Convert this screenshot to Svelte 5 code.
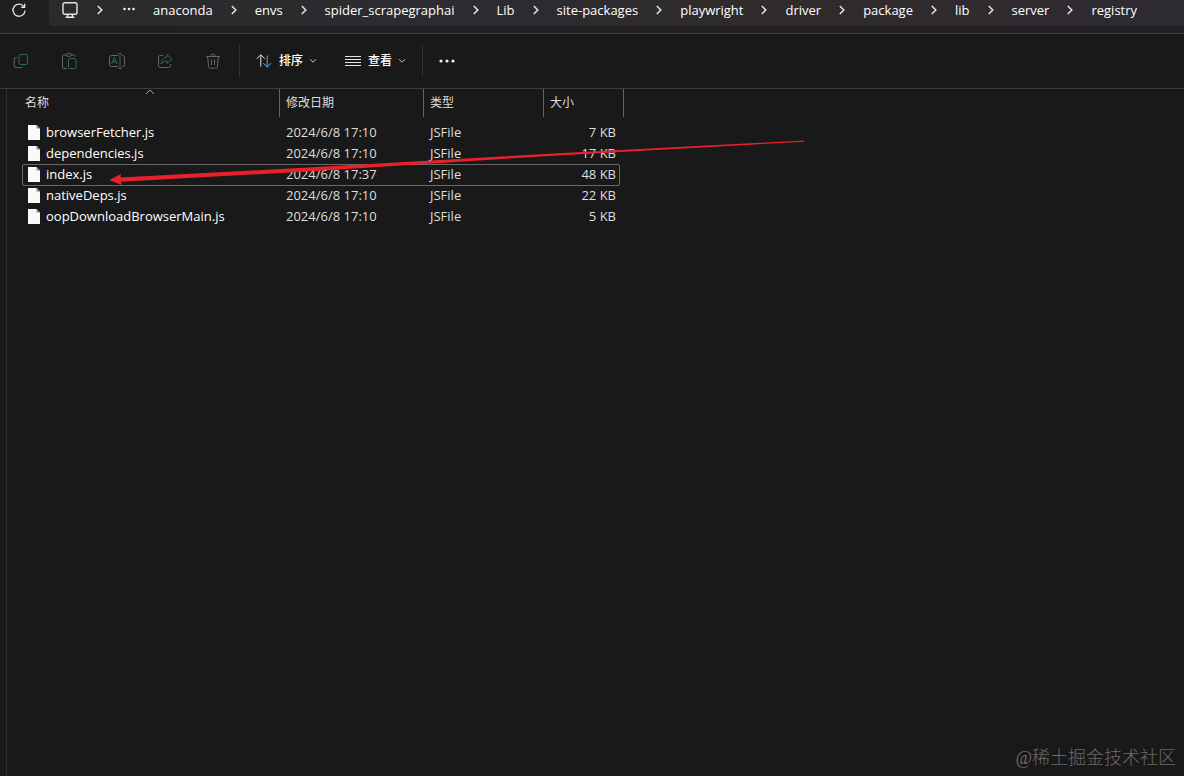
<script>
  const crumbs = [
    'anaconda',
    'envs',
    'spider_scrapegraphai',
    'Lib',
    'site-packages',
    'playwright',
    'driver',
    'package',
    'lib',
    'server',
    'registry'
  ];

  const files = [
    { name: 'browserFetcher.js', modified: '2024/6/8 17:10', type: 'JSFile', size: '7 KB' },
    { name: 'dependencies.js', modified: '2024/6/8 17:10', type: 'JSFile', size: '17 KB' },
    { name: 'index.js', modified: '2024/6/8 17:37', type: 'JSFile', size: '48 KB' },
    { name: 'nativeDeps.js', modified: '2024/6/8 17:10', type: 'JSFile', size: '22 KB' },
    { name: 'oopDownloadBrowserMain.js', modified: '2024/6/8 17:10', type: 'JSFile', size: '5 KB' }
  ];

  let focused = $state('index.js');
</script>

{#snippet chevron()}
  <svg class="chevron" width="8" height="10" viewBox="0 0 8 10" aria-hidden="true">
    <path d="M1.8 1 5.8 5l-4 4" />
  </svg>
{/snippet}

{#snippet caret()}
  <svg class="caret" width="8" height="6" viewBox="0 0 8 6" aria-hidden="true">
    <path d="M1 1.2l3 3 3-3" />
  </svg>
{/snippet}

<div class="explorer">
  <header class="address-row">
    <button class="refresh" aria-label="刷新">
      <svg width="16" height="16" viewBox="0 0 16 16">
        <path d="M13.2 5.2A6 6 0 1 0 14 8.4M13.6 1.8V5.4H10" />
      </svg>
    </button>
    <nav class="address">
      <a class="device" href="#pc" aria-label="此电脑">
        <svg width="16" height="16" viewBox="0 0 16 16">
          <rect x="1" y="0.8" width="14" height="11.4" rx="1.8" />
          <path d="M5.6 12.4V15M10.4 12.4V15M3.6 15.2h8.8" />
        </svg>
      </a>
      {@render chevron()}
      <button class="overflow" aria-label="更多位置">
        <svg width="12" height="4" viewBox="0 0 12 4">
          <circle cx="1.5" cy="2" r="1.3" /><circle cx="6" cy="2" r="1.3" /><circle cx="10.5" cy="2" r="1.3" />
        </svg>
      </button>
      <ol class="crumbs">
        {#each crumbs as crumb, i}
          <li>
            {#if i > 0}{@render chevron()}{/if}
            <a href="#{crumb}">{crumb}</a>
          </li>
        {/each}
      </ol>
    </nav>
  </header>

  <div class="toolbar">
    <div class="group actions">
      <button disabled aria-label="复制">
        <svg width="16" height="16" viewBox="0 0 16 16">
          <rect class="accent" x="6" y="1.5" width="8.5" height="10" rx="1.6" />
          <path d="M4 4.5H3A1.8 1.8 0 0 0 1.2 6.3v6.2a2.2 2.2 0 0 0 2.2 2.2H8a1.8 1.8 0 0 0 1.8-1" />
        </svg>
      </button>
      <button disabled aria-label="粘贴">
        <svg width="16" height="16" viewBox="0 0 16 16">
          <path d="M5 2H2.8A1.3 1.3 0 0 0 1.5 3.3v11A1.3 1.3 0 0 0 2.8 15.5H6M10.5 2h2.2A1.3 1.3 0 0 1 14 3.3V4" />
          <rect x="5" y="0.6" width="5.6" height="2.6" rx="1.2" />
          <rect class="accent" x="7.5" y="5.5" width="7.5" height="10" rx="1.2" />
        </svg>
      </button>
      <button disabled aria-label="重命名">
        <svg width="18" height="16" viewBox="0 0 18 16">
          <path d="M10 2.5H3.5a2 2 0 0 0-2 2v7a2 2 0 0 0 2 2H10M14 2.5h.5a2 2 0 0 1 2 2v7a2 2 0 0 1-2 2H14" />
          <path class="accent" d="M12 .5v15M10.3 .5h3.4M10.300 15.500h3.400" />
          <path class="accent" d="M3.600 11l2.800-6.500L9.200 11M4.600 8.800h3.600" />
        </svg>
      </button>
      <button disabled aria-label="共享">
        <svg width="16" height="16" viewBox="0 0 16 16">
          <path d="M6 2.500H3.500a2 2 0 0 0-2 2v8a2 2 0 0 0 2 2h8a2 2 0 0 0 2-2V11" />
          <path class="accent" d="M10 1.500L15 6l-5 4.500V8C7.500 8 5.700 8.900 4.200 11 4.500 7 6.500 4.300 10 4Z" />
        </svg>
      </button>
      <button disabled aria-label="删除">
        <svg width="16" height="16" viewBox="0 0 16 16">
          <path d="M1.200 3.500h13.600M5.800 3.300a2.200 2.200 0 0 1 4.400 0M2.600 3.700l1 9.900a1.800 1.800 0 0 0 1.800 1.600h5.200a1.800 1.800 0 0 0 1.800-1.600l1-9.900M6.500 6.500V12M9.500 6.500V12" />
        </svg>
      </button>
    </div>
    <div class="group menus">
      <button>
        <svg width="16" height="16" viewBox="0 0 16 16">
          <path d="M4.800 13.500V2M.8 5.800l4-4 4 4" />
          <path class="blue" d="M11.200 2.500V14M7.400 10.200l3.800 3.900 4-3.900" />
        </svg>
        <span>排序</span>
        {@render caret()}
      </button>
      <button>
        <svg width="16" height="16" viewBox="0 0 16 16">
          <path d="M0 3.500h16M0 6.500h16M0 9.500h16M0 12.500h16" />
        </svg>
        <span>查看</span>
        {@render caret()}
      </button>
    </div>
    <div class="group">
      <button class="more" aria-label="更多">
        <svg width="16" height="4" viewBox="0 0 16 4">
          <circle cx="2" cy="2" r="1.6" /><circle cx="8" cy="2" r="1.6" /><circle cx="14" cy="2" r="1.6" />
        </svg>
      </button>
    </div>
  </div>

  <main class="content">
    <table>
      <colgroup>
        <col class="col-name" />
        <col class="col-date" />
        <col class="col-type" />
        <col class="col-size" />
      </colgroup>
      <thead>
        <tr>
          <th aria-sort="ascending">
            名称
            <svg class="sort-mark" width="10" height="6" viewBox="0 0 10 6" aria-hidden="true">
              <path d="M1 5l4-4 4 4" />
            </svg>
          </th>
          <th>修改日期</th>
          <th>类型</th>
          <th>大小</th>
        </tr>
      </thead>
      <tbody>
        {#each files as file}
          <tr class:focused={focused === file.name} onclick={() => (focused = file.name)}>
            <td>
              <div class="file">
                <svg width="12" height="16" viewBox="0 0 12 16" aria-hidden="true">
                  <path class="sheet" d="M0 0h8.5L12 3.5V15H0Z" />
                  <path class="fold" d="M8.5 0v3.5H12Z" />
                </svg>
                <span>{file.name}</span>
              </div>
            </td>
            <td>{file.modified}</td>
            <td>{file.type}</td>
            <td class="size">{file.size}</td>
          </tr>
        {/each}
      </tbody>
    </table>

    <svg class="arrow" width="700" height="50" viewBox="0 0 700 50" aria-hidden="true">
      <path d="M1 42L13 36l-.5 3.500L200 29.500 450 15.200 696 2.500v1.300L450 17.400 200 33.500 13 43.800l1 3.200Z" />
    </svg>
  </main>

  <div class="watermark">@稀土掘金技术社区</div>
</div>

<style>
  :global(body) {
    margin: 0;
    background: #191919;
  }

  .explorer {
    display: flex;
    flex-direction: column;
    min-height: 100vh;
    position: relative;
    overflow: hidden;
    background: #191919;
    color: #fff;
    font-family: 'Open Sans', 'Noto Sans CJK SC', sans-serif;
    font-size: 13px;
    line-height: 20px;
  }

  button {
    display: flex;
    align-items: center;
    padding: 0;
    border: none;
    background: none;
    color: inherit;
    font: inherit;
  }

  a {
    color: inherit;
    text-decoration: none;
  }

  svg {
    display: block;
    flex: none;
    fill: none;
    stroke: #e4e4e4;
  }

  circle {
    fill: #f0f0f0;
    stroke: none;
  }

  .address-row {
    display: flex;
    height: 33px;
    background: linear-gradient(90deg, #1f1f20, #202024 40%, #221f1f 70%, #211f25);
    border-bottom: 1px solid #3c3c3c;
  }

  .refresh {
    width: 49px;
    height: 20px;
    padding-left: 11px;
  }

  .refresh svg {
    stroke-width: 1.3;
  }

  .address {
    display: flex;
    flex: 1;
    align-items: flex-start;
    height: 26px;
    padding-left: 13px;
    border-bottom-left-radius: 4px;
    background: linear-gradient(90deg, #2b2b2b, #2c2b31 35%, #302b2b 70%, #2d2a33);
  }

  .device svg {
    stroke-width: 1.4;
    margin: 2px 18px 0 0;
  }

  .address > .chevron {
    margin-top: 5px;
  }

  .overflow {
    height: 18px;
    margin: 0 18px 0 19px;
  }

  .chevron path {
    stroke-width: 1.5;
  }

  .crumbs {
    display: flex;
    margin: 0;
    padding: 0;
    list-style: none;
    white-space: nowrap;
  }

  .crumbs li {
    display: flex;
    align-items: center;
  }

  .crumbs .chevron {
    margin: 0 17px;
  }

  .toolbar {
    display: flex;
    align-items: center;
    height: 54px;
    border-bottom: 1px solid #3c3c3c;
  }

  .group {
    display: flex;
    align-items: center;
    height: 32px;
  }

  .group + .group {
    border-left: 1px solid #303030;
  }

  .actions button {
    justify-content: center;
    width: 48px;
  }

  .actions {
    margin-left: -3px;
    width: 242px;
  }

  .actions svg {
    stroke: #666;
  }

  .actions .accent {
    stroke: #2f6669;
  }

  .menus {
    gap: 28px;
    padding: 0 16px;
    font-size: 12px;
    font-weight: 500;
  }

  .menus span {
    margin: 0 6px 0 7px;
  }

  .blue {
    stroke: #4cb5ee;
  }

  .caret path {
    stroke: #c4c4c4;
  }

  .more {
    margin-left: 16px;
  }

  .content {
    flex: 1;
    position: relative;
    margin-left: 6px;
    padding-left: 15px;
    border-left: 1px solid #2e2e2e;
  }

  table {
    table-layout: fixed;
    width: 602px;
    border-collapse: separate;
    border-spacing: 0;
  }

  .col-name {
    width: 258px;
  }

  .col-date {
    width: 144px;
  }

  .col-type {
    width: 120px;
  }

  .col-size {
    width: 80px;
  }

  th {
    position: relative;
    height: 28px;
    padding: 0 6px;
    border-right: 1px solid #636363;
    color: #dedede;
    font-size: 12px;
    font-weight: 400;
    text-align: left;
  }

  th:first-child {
    padding-left: 3px;
  }

  .sort-mark {
    position: absolute;
    top: 0;
    left: calc(50% - 6px);
    stroke: #a0a0a0;
  }

  tbody::before {
    content: '';
    display: block;
    height: 5px;
  }

  tbody tr {
    position: relative;
  }

  td {
    height: 21px;
    padding: 0 6px;
    color: #dedede;
    white-space: nowrap;
    line-height: 21px;
  }

  .focused::after {
    content: '';
    position: absolute;
    inset: 0 4px -1px 0;
    border: 1px solid #686868;
    border-radius: 2px;
  }

  .file {
    display: flex;
    align-items: center;
    gap: 6px;
    color: #fff;
  }

  .file svg {
    stroke: none;
  }

  .sheet {
    fill: #fafafa;
  }

  .fold {
    fill: #8b8b8b;
  }

  .size {
    padding-right: 8px;
    text-align: right;
  }

  .arrow {
    position: absolute;
    top: 49px;
    left: 101px;
    pointer-events: none;
    stroke: none;
    fill: #e5222b;
  }

  .watermark {
    position: absolute;
    right: 8px;
    bottom: 6px;
    color: #6b6b6b;
    font-family: 'Liberation Serif', 'Noto Sans CJK SC', serif;
    font-size: 18px;
    font-weight: 300;
    line-height: 24px;
  }
</style>
